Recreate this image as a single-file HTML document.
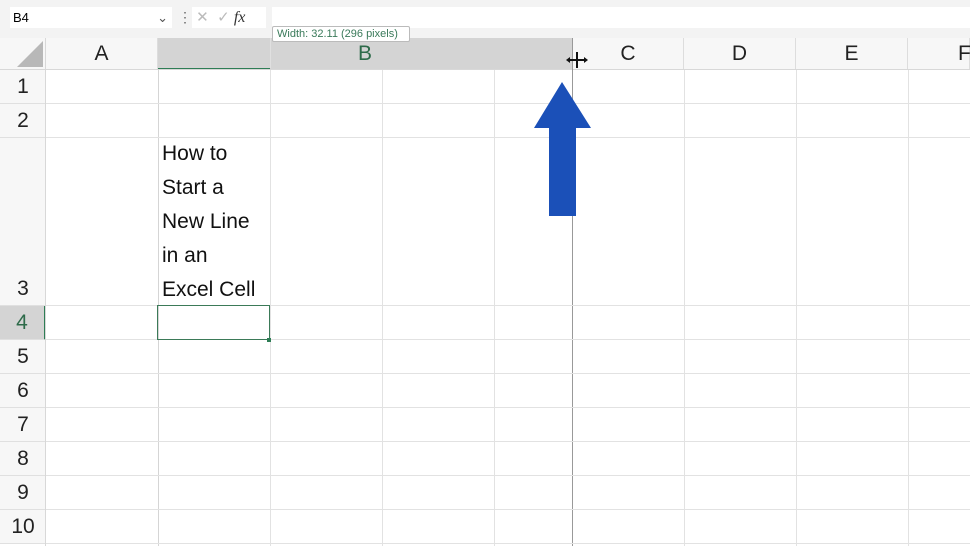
<!DOCTYPE html>
<html><head><style>
body{margin:0;width:970px;height:546px;overflow:hidden;background:#fff;font-family:"Liberation Sans",sans-serif;position:relative}
.a{position:absolute}
.vl{position:absolute;top:70px;height:476px;width:1px;background:#e2e2e2}
.hl{position:absolute;left:46px;right:0;height:1px;background:#e2e2e2}
.rh{position:absolute;left:0;width:46px;text-align:center;font-size:21px;color:#222;background:#f7f7f7;border-bottom:1px solid #e0e0e0;box-sizing:border-box;display:flex;align-items:flex-end;justify-content:center;padding-bottom:4px}
.ch{position:absolute;top:38px;height:32px;font-size:21px;color:#222;text-align:center;line-height:32px;border-right:1px solid #ddd;box-sizing:border-box}
.t{position:absolute;left:162px;font-size:21px;color:#111}
</style></head><body>
<div class="a" style="left:0;top:0;width:970px;height:38px;background:#f3f3f3"></div>
<div class="a" style="left:10px;top:7px;width:162px;height:21px;background:#fff;font-size:13px;line-height:21px;padding-left:3px;box-sizing:border-box">B4<span style="position:absolute;right:4px;color:#555">&#8964;</span></div>
<div class="a" style="left:178px;top:9px;color:#666;font-size:14px">&#8942;</div>
<div class="a" style="left:192px;top:7px;width:74px;height:21px;background:#fff;color:#bbb;font-size:15px;line-height:21px">&nbsp;✕ &nbsp;✓ <i style="color:#333;font-family:'Liberation Serif';font-size:16px">fx</i></div>
<div class="a" style="left:272px;top:7px;width:698px;height:21px;background:#fff"></div>
<div class="a" style="left:0;top:38px;width:46px;height:32px;background:#f7f7f7"></div>
<div class="a" style="left:17px;top:41px;width:0;height:0;border-left:26px solid transparent;border-bottom:26px solid #b8b8b8"></div>
<div class="ch" style="left:46px;width:112px;background:#f7f7f7">A</div>
<div class="ch" style="left:158px;width:414px;background:#d4d4d4;color:#2e6b4a;border-right:none"><span style="position:relative;left:0">B</span></div>
<div class="a" style="left:158px;top:68px;width:112px;height:2px;background:#2e7d55"></div>
<div class="a" style="left:270px;top:38px;width:1px;height:30px;background:#e0e0e0"></div>
<div class="ch" style="left:573px;width:111px;background:#f7f7f7">C</div>
<div class="ch" style="left:684px;width:112px;background:#f7f7f7">D</div>
<div class="ch" style="left:796px;width:112px;background:#f7f7f7">E</div>
<div class="ch" style="left:908px;width:62px;background:#f7f7f7;text-align:left;padding-left:50px">F</div>
<div class="a" style="left:0;top:69px;width:970px;height:1px;background:#d8d8d8"></div>
<div class="vl" style="left:158px;background:#d5d5d5"></div>
<div class="vl" style="left:270px"></div><div class="vl" style="left:382px"></div><div class="vl" style="left:494px"></div>
<div class="vl" style="left:572px;top:38px;height:508px;background:#999"></div>
<div class="vl" style="left:684px"></div><div class="vl" style="left:796px"></div><div class="vl" style="left:908px"></div>
<div class="hl" style="top:103px"></div><div class="hl" style="top:137px"></div><div class="hl" style="top:305px"></div><div class="hl" style="top:339px"></div><div class="hl" style="top:373px"></div><div class="hl" style="top:407px"></div><div class="hl" style="top:441px"></div><div class="hl" style="top:475px"></div><div class="hl" style="top:509px"></div><div class="hl" style="top:543px"></div>
<div class="rh" style="top:70px;height:34px">1</div>
<div class="rh" style="top:104px;height:34px">2</div>
<div class="rh" style="top:138px;height:168px">3</div>
<div class="rh" style="top:306px;height:34px;background:#d4d4d4;color:#2e6b4a;border-right:2px solid #2e7d55">4</div>
<div class="rh" style="top:340px;height:34px">5</div>
<div class="rh" style="top:374px;height:34px">6</div>
<div class="rh" style="top:408px;height:34px">7</div>
<div class="rh" style="top:442px;height:34px">8</div>
<div class="rh" style="top:476px;height:34px">9</div>
<div class="rh" style="top:510px;height:34px">10</div>
<div class="a" style="left:45px;top:38px;width:1px;height:508px;background:#d8d8d8"></div>
<div class="t" style="top:142px">How to</div>
<div class="t" style="top:176px">Start a</div>
<div class="t" style="top:210px">New Line</div>
<div class="t" style="top:244px">in an</div>
<div class="t" style="top:278px">Excel Cell</div>
<div class="a" style="left:157px;top:305px;width:113px;height:35px;border:1.5px solid #3b7a58;box-sizing:border-box"></div>
<div class="a" style="left:267px;top:338px;width:4px;height:4px;background:#2e7d55"></div>
<div class="a" style="left:272px;top:26px;width:138px;height:16px;background:#fff;border:1px solid #bbb;border-radius:2px;font-size:11px;color:#3a7a5a;line-height:14px;padding-left:4px;box-sizing:border-box;z-index:5">Width: 32.11 (296 pixels)</div>
<svg class="a" style="left:0;top:0" width="970" height="546">
<polygon points="562,82 591,128 576,128 576,216 549,216 549,128 534,128" fill="#1b50b8"/>
<g stroke="#111" stroke-width="2" fill="#111"><line x1="577" y1="52" x2="577" y2="68"/><line x1="568" y1="60" x2="586" y2="60"/></g>
<polygon points="566,60 570,57 570,63" fill="#111"/><polygon points="588,60 584,57 584,63" fill="#111"/>
</svg>
</body></html>
